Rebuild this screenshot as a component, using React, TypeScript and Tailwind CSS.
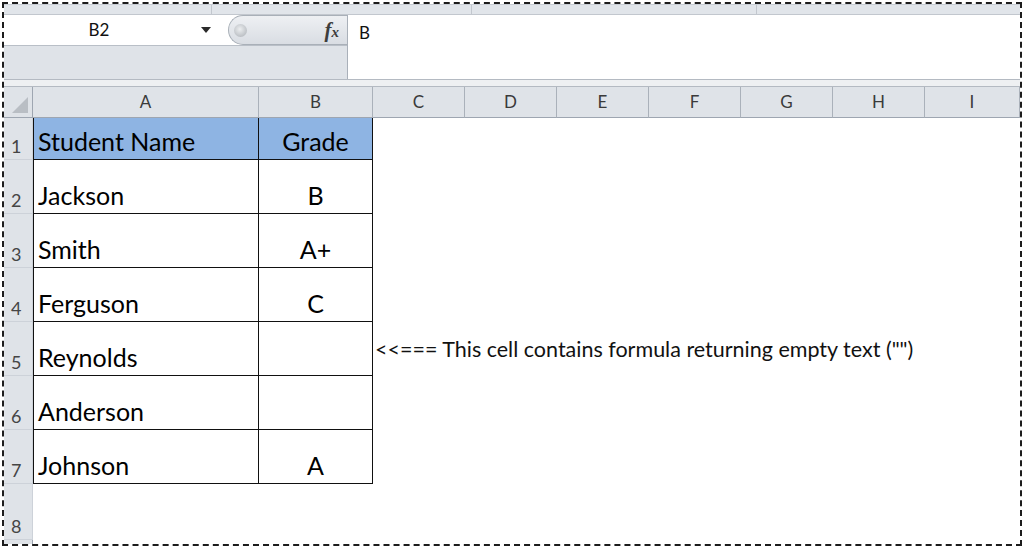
// Excel 2010 style sheet: formula bar, headers and a small grade table.

const COLS = ["A", "B", "C", "D", "E", "F", "G", "H", "I"];

const ROWS: { n: number; name: string; grade: string; note?: string }[] = [
  { n: 2, name: "Jackson", grade: "B" },
  { n: 3, name: "Smith", grade: "A+" },
  { n: 4, name: "Ferguson", grade: "C" },
  {
    n: 5,
    name: "Reynolds",
    grade: "",
    note: '<<=== This cell contains formula returning empty text ("")',
  },
  { n: 6, name: "Anderson", grade: "" },
  { n: 7, name: "Johnson", grade: "A" },
];

const font = "font-['Lato','Open_Sans',sans-serif]";

function RowHead({ n, last }: { n?: number; last?: boolean }) {
  return (
    <div
      className={`flex items-end bg-[#dfe3e8] pb-[4px] pl-[7px] text-[18px] leading-none text-[#454545] border-r border-[#9ea6b1] ${
        last ? "" : "border-b border-[#cdd2d9]"
      }`}
    >
      {n}
    </div>
  );
}

export default function App() {
  return (
    <div className={`h-[551px] w-[1024px] bg-white p-[2px] pb-[5px] ${font}`}>
      <div className="flex h-full flex-col overflow-hidden border-2 border-dashed border-[#1c1c1c]">
        {/* ribbon edge */}
        <div className="flex h-[10px] shrink-0 border-t border-[#c9ced5] bg-[#e1e5ea]">
          <div className="w-[208px] border-r border-[#c2c7ce]" />
          <div className="w-[260px] border-r border-[#c2c7ce]" />
          <div className="w-[285px] border-r border-[#c2c7ce]" />
        </div>

        {/* formula bar */}
        <div className="flex h-[65px] shrink-0 border-t border-[#c2c7ce]">
          <div className="flex w-[343px] flex-col">
            <div className="flex h-[31px] border-b border-[#b9bfc7]">
              <div className="flex w-[224px] items-center bg-white">
                <span className="w-[190px] text-center text-[17px] text-[#111]">B2</span>
                <span className="ml-[7px] h-0 w-0 border-x-[5px] border-t-[6px] border-x-transparent border-t-[#2a2a2a]" />
              </div>
              <div className="flex flex-1 items-center rounded-l-full border border-r-0 border-[#a9b0b8] bg-gradient-to-b from-[#eef0f3] to-[#d9dde3]">
                <span className="ml-[5px] h-[13px] w-[13px] rounded-full bg-[radial-gradient(circle_at_45%_40%,#eceef0,#a9aeb4)]" />
                <span className="ml-auto mr-[8px] font-['Liberation_Serif',serif] text-[21px] font-bold italic leading-none text-[#3d3d3d]">
                  f<span className="text-[15px]">x</span>
                </span>
              </div>
            </div>
            <div className="flex-1 bg-[#dfe3e8]" />
          </div>
          <div className="flex-1 border-l border-[#a9b0b9] bg-white pl-[11px] pt-[5px] text-[17px] text-[#111]">
            B
          </div>
        </div>

        {/* divider */}
        <div className="h-[8px] shrink-0 border-y border-[#b4bac2] bg-[#eef0f2]" />

        {/* sheet */}
        <div className="grid flex-1 grid-cols-[29px_226px_114px_repeat(6,92px)_1fr] grid-rows-[31px_42px_repeat(6,54px)_56px_1fr] text-[#000]">
          {/* column headers */}
          <div className="relative border-r border-b border-[#9ea6b1] bg-[#dfe3e8]">
            <span className="absolute bottom-[4px] right-[4px] h-0 w-0 [border-bottom:16px_solid_#b9bec4] [border-left:16px_solid_transparent]" />
          </div>
          {COLS.map((c) => (
            <div
              key={c}
              className="flex items-center justify-center border-r border-b border-[#aab1ba] border-b-[#9ea6b1] bg-[#dfe3e8] text-[17px] text-[#3a3a3a]"
            >
              {c}
            </div>
          ))}

          {/* row 1: table header */}
          <RowHead n={1} />
          <div className="flex items-end border-x border-b border-[#111] bg-[#8eb4e3] pb-[5px] pl-[4px] text-[25px] leading-none">
            Student Name
          </div>
          <div className="flex items-end justify-center border-r border-b border-[#111] bg-[#8eb4e3] pb-[5px] text-[25px] leading-none">
            Grade
          </div>
          {COLS.slice(2).map((c) => (
            <div key={c} />
          ))}

          {ROWS.map((r) => (
            <div key={r.n} className="contents">
              <RowHead n={r.n} />
              <div className="flex items-end border-x border-b border-[#111] pb-[5px] pl-[4px] text-[25px] leading-none">
                {r.name}
              </div>
              <div className="flex items-end justify-center border-r border-b border-[#111] pb-[5px] text-[25px] leading-none">
                {r.grade}
              </div>
              <div className="relative">
                {r.note && (
                  <span className="absolute left-[2px] top-[17px] whitespace-nowrap text-[21.5px] leading-none text-[#111]">
                    {r.note}
                  </span>
                )}
              </div>
              {COLS.slice(3).map((c) => (
                <div key={c} />
              ))}
            </div>
          ))}

          {/* row 8 and the sliver of row 9 */}
          <RowHead n={8} />
          {COLS.map((c) => (
            <div key={c} />
          ))}
          <RowHead last />
          {COLS.map((c) => (
            <div key={c} />
          ))}
        </div>
      </div>
    </div>
  );
}
